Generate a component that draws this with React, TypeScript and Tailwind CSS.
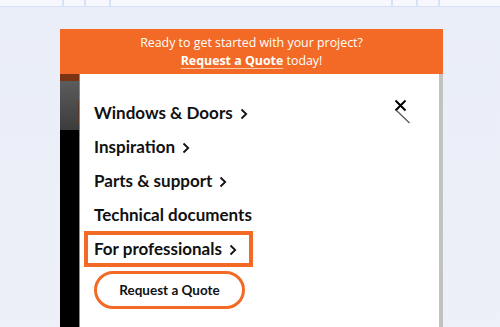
import React from 'react'

const menu = [
  { label: 'Windows & Doors', chevron: true },
  { label: 'Inspiration', chevron: true },
  { label: 'Parts & support', chevron: true },
  { label: 'Technical documents', chevron: false },
]

function Chevron() {
  return (
    <svg width="8" height="12" viewBox="0 0 8 12" className="ml-[7px] mt-[1px]">
      <path d="M1.5 1.5 L6.2 6 L1.5 10.5" fill="none" stroke="#111" strokeWidth="1.8" />
    </svg>
  )
}

export default function App() {
  return (
    <div className="w-[500px] h-[327px] overflow-hidden bg-gradient-to-b from-[#eaeef8] to-[#edf0f8]">
      {/* top strip */}
      <div className="h-[7px] bg-[#f6f8fd] border-b-[1px] border-[#d6e2f7] relative">
        <div className="absolute left-[62px] top-0 h-full w-[2px] bg-[#d6e2f7]" />
        <div className="absolute left-[84px] top-0 h-full w-[2px] bg-[#d6e2f7]" />
        <div className="absolute left-[109px] top-0 h-full w-[2px] bg-[#d6e2f7]" />
        <div className="absolute left-[391px] top-0 h-full w-[2px] bg-[#d6e2f7]" />
        <div className="absolute left-[416px] top-0 h-full w-[2px] bg-[#d6e2f7]" />
        <div className="absolute left-[438px] top-0 h-full w-[2px] bg-[#d6e2f7]" />
      </div>

      <div className="ml-[60px] mt-[22px] w-[383px]">
        {/* banner */}
        <div
          className="h-[45px] bg-[#f26a25] text-white text-[12.4px] leading-[18px] flex flex-col items-center justify-center pt-[1px]"
          style={{ fontFamily: '"Open Sans", sans-serif' }}
        >
          <div>Ready to get started with your project?</div>
          <div>
            <span className="font-bold underline underline-offset-[3px] decoration-[#f7c9ad]">Request a Quote</span> today!
          </div>
        </div>

        {/* body */}
        <div className="flex h-[253px]">
          <div className="w-[19px] flex flex-col">
            <div className="h-[7px] bg-[#7a3414]" />
            <div className="h-[49px] bg-gradient-to-b from-[#5c5c5c] to-[#3c3c3c] relative">
              <div className="absolute right-0 top-[20px] w-[1px] h-[22px] bg-[#5a3a2a]" />
            </div>
            <div className="flex-1 bg-black" />
          </div>
          <div className="w-[1px] bg-[#8a8a8a]" />
          <div
            className="flex-1 bg-white pt-[22px] pl-[14px] relative"
            style={{ fontFamily: 'Lato, "Liberation Sans", sans-serif' }}
          >
            <svg className="absolute left-[314px] top-[25px]" width="17" height="25" viewBox="0 0 17 25">
              <path d="M1.5 1.5 L11.5 11.5 M11.5 1.5 L1.5 11.5" stroke="#000" strokeWidth="2" fill="none" />
              <path d="M2.5 11.5 L15.5 24" stroke="#555" strokeWidth="1.2" fill="none" />
            </svg>
            {menu.map((m) => (
              <div key={m.label} className="h-[34px] flex items-center text-[17px] font-bold text-[#111]">
                {m.label}
                {m.chevron && <Chevron />}
              </div>
            ))}
            <div className="-ml-[10px] -my-[1px] w-[169px] h-[36px] border-[4px] border-[#f26a25] pl-[6px] flex items-center text-[17px] font-bold text-[#111]">
              For professionals
              <Chevron />
            </div>
            <div className="mt-[5px] w-[151px] h-[38px] rounded-full border-[3px] border-[#f26a25] flex items-center justify-center text-[13.5px] font-bold text-[#111]">
              Request a Quote
            </div>
          </div>
          <div className="w-[4px] bg-[#c2c2c2]" />
        </div>
      </div>
    </div>
  )
}
